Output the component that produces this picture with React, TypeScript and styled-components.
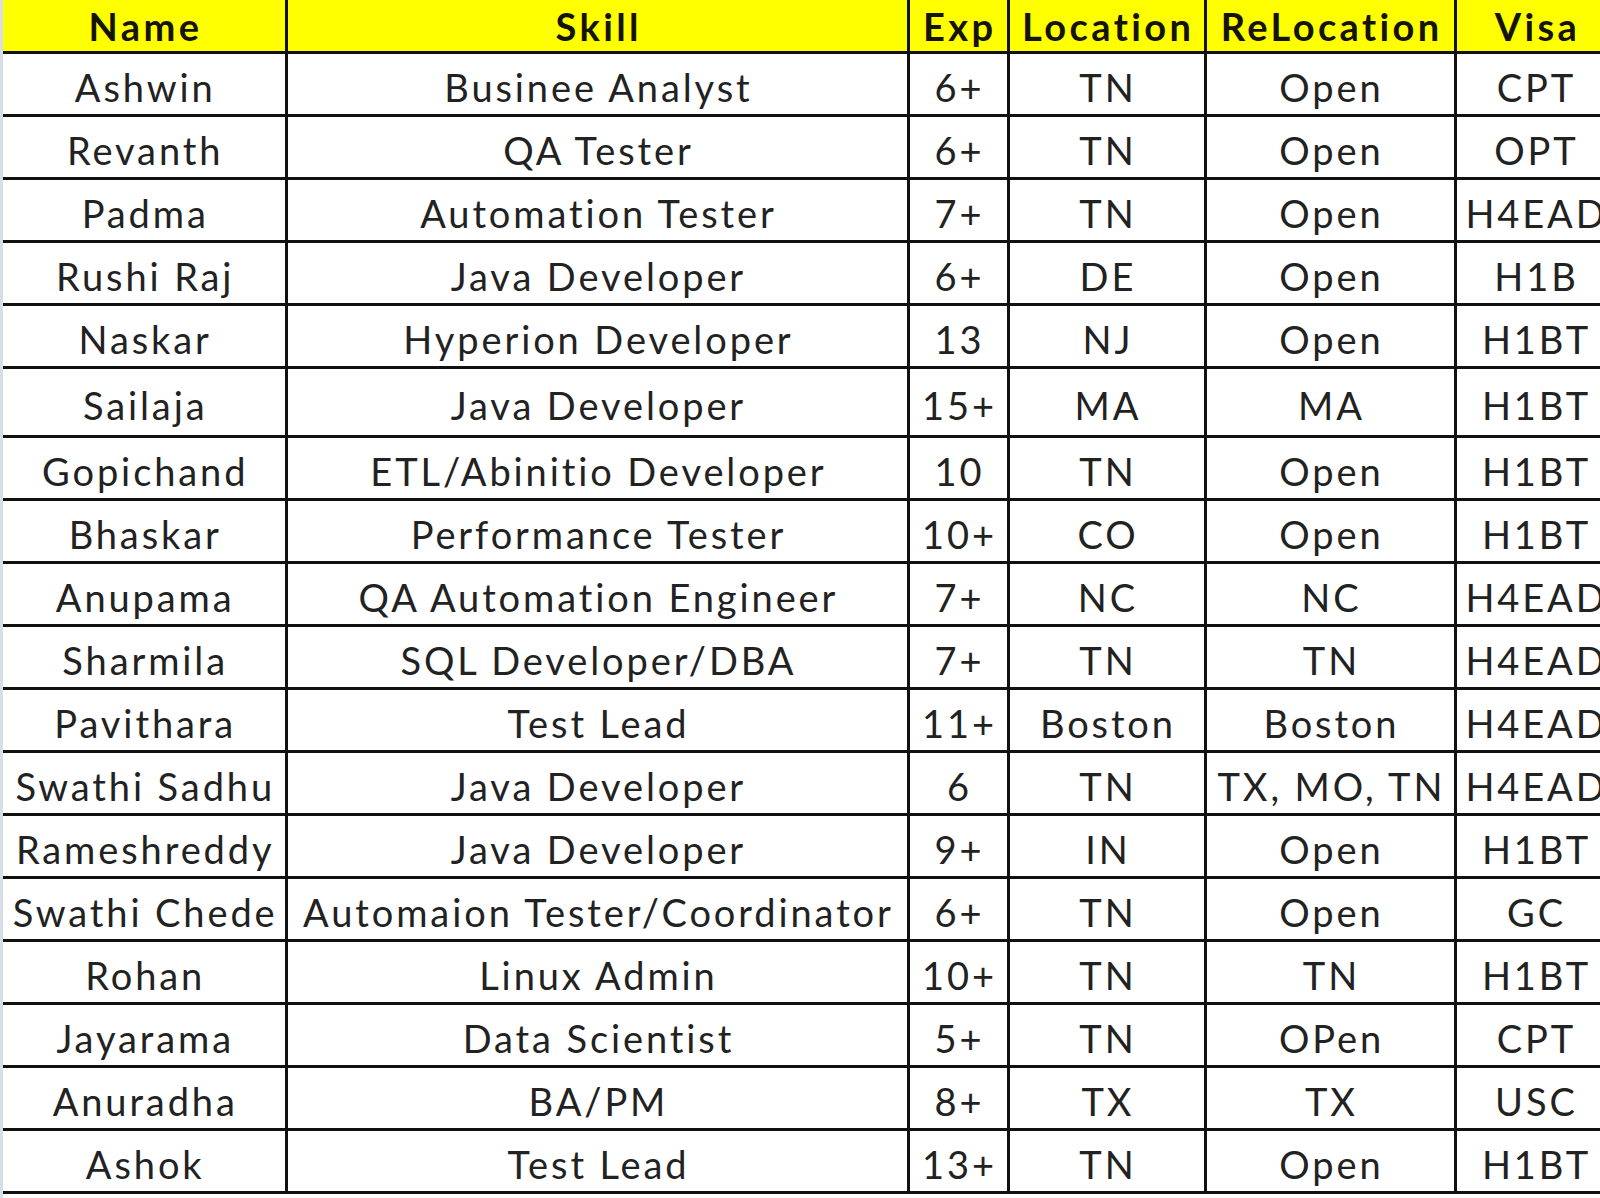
import React from 'react';
import styled, { createGlobalStyle } from 'styled-components';

const GlobalStyle = createGlobalStyle`
  html, body {
    margin: 0;
    padding: 0;
    background: #ffffff;
  }
`;

const rows = [
  ['Ashwin', 'Businee Analyst', '6+', 'TN', 'Open', 'CPT'],
  ['Revanth', 'QA Tester', '6+', 'TN', 'Open', 'OPT'],
  ['Padma', 'Automation Tester', '7+', 'TN', 'Open', 'H4EAD'],
  ['Rushi Raj', 'Java Developer', '6+', 'DE', 'Open', 'H1B'],
  ['Naskar', 'Hyperion Developer', '13', 'NJ', 'Open', 'H1BT'],
  ['Sailaja', 'Java Developer', '15+', 'MA', 'MA', 'H1BT'],
  ['Gopichand', 'ETL/Abinitio Developer', '10', 'TN', 'Open', 'H1BT'],
  ['Bhaskar', 'Performance Tester', '10+', 'CO', 'Open', 'H1BT'],
  ['Anupama', 'QA Automation Engineer', '7+', 'NC', 'NC', 'H4EAD'],
  ['Sharmila', 'SQL Developer/DBA', '7+', 'TN', 'TN', 'H4EAD'],
  ['Pavithara', 'Test Lead', '11+', 'Boston', 'Boston', 'H4EAD'],
  ['Swathi Sadhu', 'Java Developer', '6', 'TN', 'TX, MO, TN', 'H4EAD'],
  ['Rameshreddy', 'Java Developer', '9+', 'IN', 'Open', 'H1BT'],
  ['Swathi Chede', 'Automaion Tester/Coordinator', '6+', 'TN', 'Open', 'GC'],
  ['Rohan', 'Linux Admin', '10+', 'TN', 'TN', 'H1BT'],
  ['Jayarama', 'Data Scientist', '5+', 'TN', 'OPen', 'CPT'],
  ['Anuradha', 'BA/PM', '8+', 'TX', 'TX', 'USC'],
  ['Ashok', 'Test Lead', '13+', 'TN', 'Open', 'H1BT'],
];

const headers = ['Name', 'Skill', 'Exp', 'Location', 'ReLocation', 'Visa'];
const widths = [283, 622, 100, 197, 250, 160];

const App: React.FC = () => {
  return (
    <>
      <GlobalStyle />
      <Page>
        <Sheet>
          <colgroup>
            {widths.map((w, i) => (
              <col key={i} style={{ width: w }} />
            ))}
          </colgroup>
          <thead>
            <tr>
              {headers.map((h) => (
                <HeadCell key={h}>{h}</HeadCell>
              ))}
            </tr>
          </thead>
          <tbody>
            {rows.map((r, i) => (
              <Row key={i} $tall={r[0] === 'Sailaja'}>
                {r.map((c, j) => (
                  <Cell key={j}>{c}</Cell>
                ))}
              </Row>
            ))}
          </tbody>
        </Sheet>
      </Page>
    </>
  );
};

const Page = styled.div`
  width: 1600px;
  height: 1198px;
  overflow: hidden;
  background: #ffffff;
  border-left: 3px solid #d9dde5;
  box-sizing: border-box;
`;

const Sheet = styled.table`
  table-layout: fixed;
  width: 1612px;
  border-collapse: collapse;
  font-family: Lato, 'Liberation Sans', sans-serif;
  color: #222222;

  th:first-child,
  td:first-child {
    border-left: none;
  }
`;

const HeadCell = styled.th`
  height: 51px;
  padding: 0 0 0 3.4px;
  background: #ffff00;
  color: #141400;
  font-size: 38px;
  font-weight: 700;
  letter-spacing: 3.4px;
  text-align: center;
  vertical-align: middle;
  border-left: 3px solid #111111;
  border-bottom: 3px solid #111111;
  white-space: nowrap;
  overflow: hidden;
`;

const Row = styled.tr<{ $tall?: boolean }>`
  height: ${({ $tall }) => ($tall ? '69px' : '63px')};
`;

const Cell = styled.td`
  padding: 6px 0 0 2.9px;
  font-size: 38px;
  font-weight: 400;
  letter-spacing: 2.9px;
  text-align: center;
  vertical-align: middle;
  border: 3px solid #111111;
  border-top: none;
  white-space: nowrap;
  overflow: hidden;
`;

export default App;
